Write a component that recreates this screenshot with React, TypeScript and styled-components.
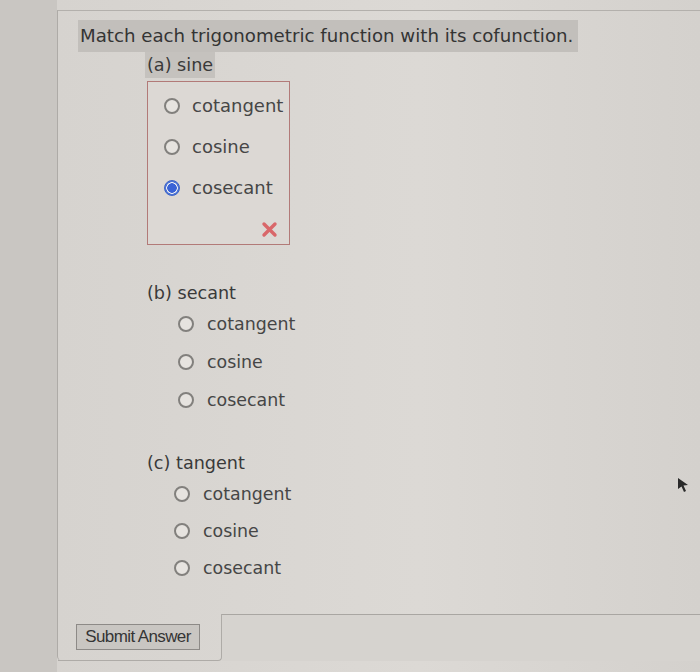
import React from 'react';
import styled, { createGlobalStyle } from 'styled-components';

const GlobalStyle = createGlobalStyle`
  html, body {
    margin: 0;
    padding: 0;
    background: #cfccc8;
  }
  #root {
    height: 672px;
    overflow: hidden;
  }
`;

const Screen = styled.div`
  position: relative;
  display: flex;
  height: 672px;
  background: linear-gradient(90deg, #c9c6c2 0px, #c9c6c2 57px, #d6d3cf 57px, #dcd9d5 60%, #d4d1cd 100%);
  font-family: 'DejaVu Sans', Verdana, sans-serif;
  color: #3d3d3d;
`;

const Gutter = styled.div`
  width: 57px;
  flex-shrink: 0;
`;

const Frame = styled.div`
  flex: 1;
  display: flex;
  flex-direction: column;
  margin-top: 10px;
  height: 650px;
  border-top: 1px solid #b3b0ac;
  border-left: 1px solid #aeaba7;
  border-bottom-left-radius: 5px;
`;

const Body = styled.div`
  flex: 1;
  padding: 9px 0 0 20px;
`;

const Title = styled.div`
  display: inline-block;
  background: #c2bfbb;
  font-size: 18.2px;
  line-height: 32px;
  padding: 0 5px 0 2px;
  color: #343434;
`;

const Questions = styled.div`
  margin-left: 67px;
`;

const Part = styled.div<{ $gap: number }>`
  margin-top: ${({ $gap }) => $gap}px;
`;

const PartLabel = styled.div<{ $shade?: boolean }>`
  display: inline-block;
  font-size: 17.6px;
  line-height: ${({ $shade }) => ($shade ? 26 : 23)}px;
  padding: 0 2px;
  background: ${({ $shade }) => ($shade ? '#c5c2be' : 'transparent')};
  color: #3a3a3a;
`;

const WrongBox = styled.div`
  width: 141px;
  margin: 3px 0 0 2px;
  padding-top: 3px;
  border: 1px solid #b27a78;
  background: #dcd8d4;
`;

const OptionList = styled.div<{ $indent: number; $gap: number }>`
  padding-left: ${({ $indent }) => $indent}px;
  label {
    gap: ${({ $gap }) => $gap}px;
  }
`;

const OptionRow = styled.label<{ $height: number; $size: number }>`
  display: flex;
  align-items: center;
  height: ${({ $height }) => $height}px;
  font-size: ${({ $size }) => $size}px;
  color: #464646;
`;

const Radio = styled.span<{ $checked?: boolean }>`
  box-sizing: border-box;
  width: 16px;
  height: 16px;
  border-radius: 50%;
  flex-shrink: 0;
  border: ${({ $checked }) => ($checked ? '1.5px solid #3c64c8' : '2px solid #82807d')};
  background: ${({ $checked }) =>
    $checked ? 'radial-gradient(circle, #3a63d6 0 4.5px, #f2f2f2 5px 5.5px, #5076d6 6px)' : '#e6e3df'};
`;

const MarkRow = styled.div`
  display: flex;
  justify-content: flex-end;
  padding: 13px 11px 6px 0;
`;

const Footer = styled.div`
  display: flex;
  height: 47px;
`;

const ButtonTab = styled.div`
  width: 164px;
  box-sizing: border-box;
  padding: 10px 0 0 18px;
  border-bottom: 1px solid #aeaba7;
  border-right: 1px solid #aeaba7;
  border-bottom-right-radius: 4px;
`;

const SubmitButton = styled.button`
  width: 124px;
  height: 26px;
  padding: 0;
  border: 1.5px solid #8d8a87;
  background: #c9c6c2;
  font-family: 'Liberation Sans', Arial, sans-serif;
  font-size: 17px;
  letter-spacing: -0.6px;
  color: #353535;
`;

const Rest = styled.div`
  flex: 1;
  border-top: 1px solid #a9a6a2;
  background: #d6d3cf;
`;

const Cursor = styled.svg`
  position: absolute;
  left: 676px;
  top: 476px;
`;

const choices = ['cotangent', 'cosine', 'cosecant'];

const WrongMark = () => (
  <svg width="17" height="17" viewBox="0 0 17 17">
    <path d="M3 3 L14 14 M14 3 L3 14" stroke="#d9676a" strokeWidth="3.4" strokeLinecap="round" />
  </svg>
);

interface OptionsProps {
  indent: number;
  gap: number;
  height: number;
  size: number;
  checked?: string;
}

const Options = ({ indent, gap, height, size, checked }: OptionsProps) => (
  <OptionList $indent={indent} $gap={gap}>
    {choices.map((c) => (
      <OptionRow key={c} $height={height} $size={size}>
        <Radio $checked={c === checked} />
        {c}
      </OptionRow>
    ))}
  </OptionList>
);

export default function App() {
  return (
    <>
      <GlobalStyle />
      <Screen>
        <Gutter />
        <Frame>
          <Body>
            <Title>Match each trigonometric function with its cofunction.</Title>
            <Questions>
              <PartLabel $shade>(a) sine</PartLabel>
              <WrongBox>
                <Options indent={16} gap={12} height={41} size={18} checked="cosecant" />
                <MarkRow>
                  <WrongMark />
                </MarkRow>
              </WrongBox>
              <Part $gap={37}>
                <PartLabel>(b) secant</PartLabel>
                <Options indent={33} gap={13} height={38} size={17.4} />
              </Part>
              <Part $gap={33}>
                <PartLabel>(c) tangent</PartLabel>
                <Options indent={29} gap={13} height={37} size={17.4} />
              </Part>
            </Questions>
          </Body>
          <Footer>
            <ButtonTab>
              <SubmitButton>Submit Answer</SubmitButton>
            </ButtonTab>
            <Rest />
          </Footer>
        </Frame>
        <Cursor width="14" height="18" viewBox="0 0 14 18">
          <path d="M2 2 L12 9 L7.5 9.5 L10 15 L8 16 L5.5 10.5 L2 13 Z" fill="#2a2a2a" />
        </Cursor>
      </Screen>
    </>
  );
}
